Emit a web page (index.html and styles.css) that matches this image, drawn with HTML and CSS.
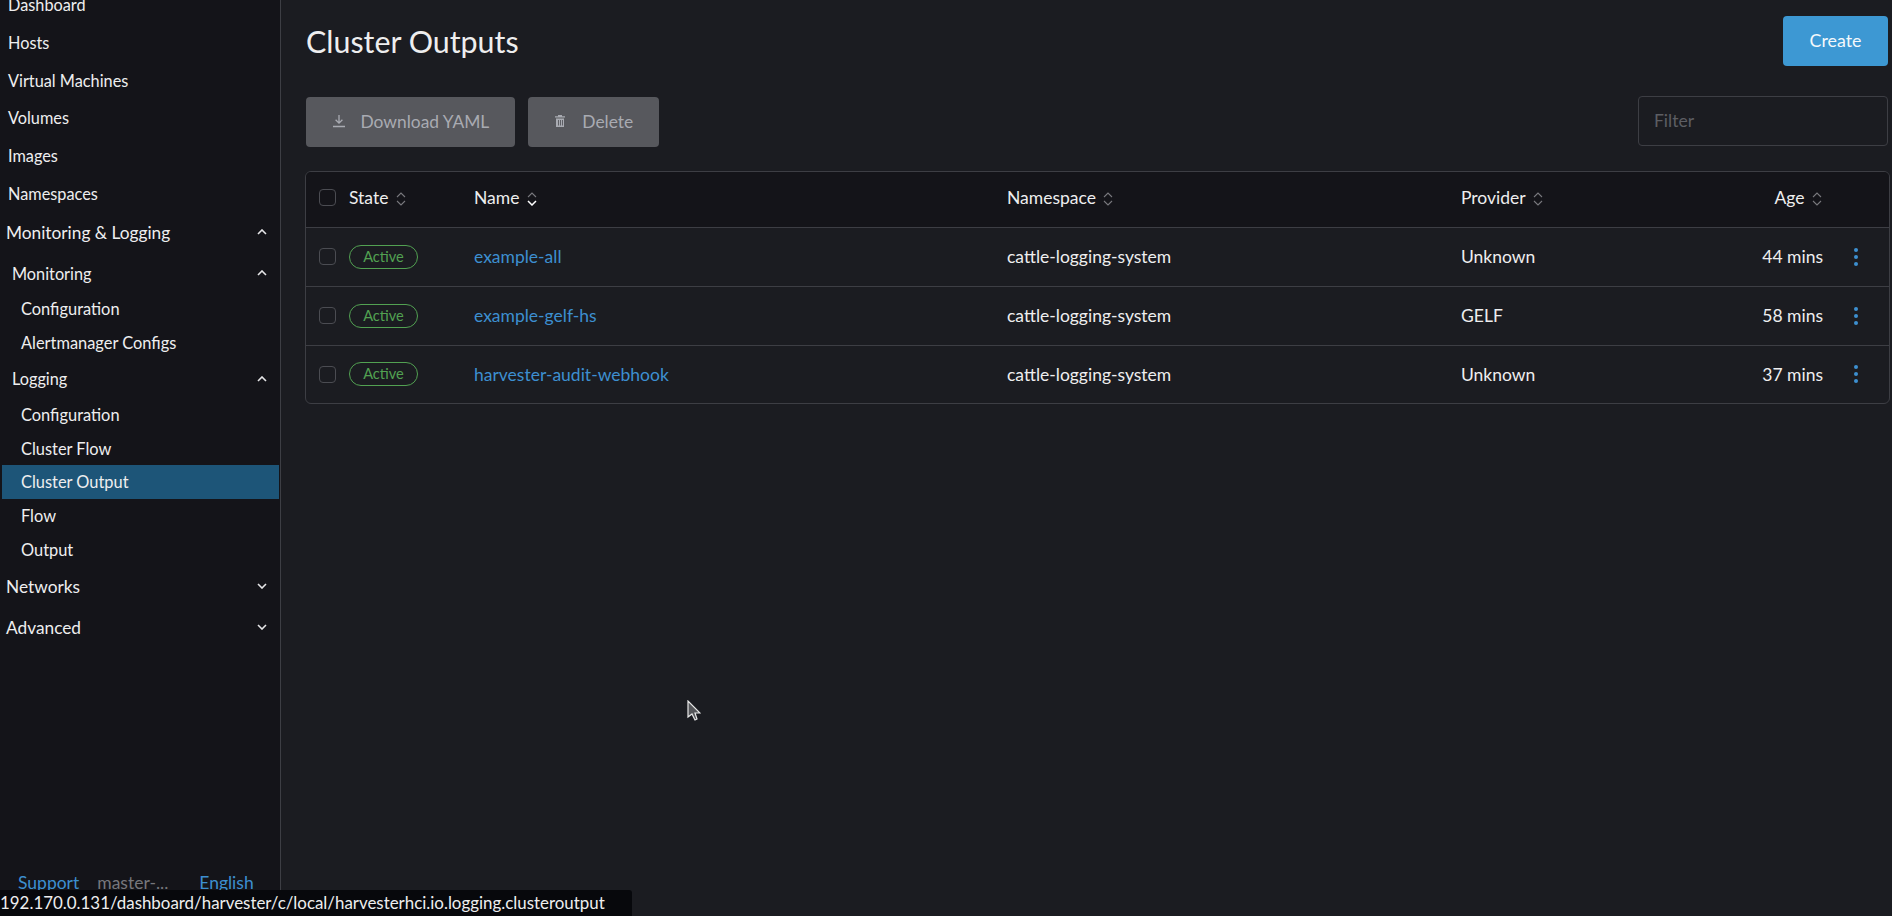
FILE: index.html
```html
<!DOCTYPE html>
<html lang="en">
<head>
    <meta charset="UTF-8">
    <meta name="viewport" content="width=device-width, initial-scale=1.0">
    <title>Cluster Outputs</title>
    <link rel="stylesheet" href="styles.css">
</head>
<body>
    <svg class="icon-defs" width="0" height="0" aria-hidden="true">
        <symbol id="chev-up" viewBox="0 0 10 6"><path d="M1 5l4-4 4 4" fill="none" stroke="currentColor" stroke-width="1.6"/></symbol>
        <symbol id="chev-down" viewBox="0 0 10 6"><path d="M1 1l4 4 4-4" fill="none" stroke="currentColor" stroke-width="1.6"/></symbol>
        <symbol id="sort" viewBox="0 0 10 14"><path d="M1 5l4-4 4 4M1 9l4 4 4-4" fill="none" stroke="currentColor" stroke-width="1.1"/></symbol>
        <symbol id="sort-down" viewBox="0 0 10 14"><path d="M1 5l4-4 4 4" fill="none" stroke="#77777c" stroke-width="1.1"/><path d="M1 9l4 4 4-4" fill="none" stroke="#fff" stroke-width="1.5"/></symbol>
    </svg>

    <!-- Left nav -->
    <aside class="sidebar">
        <nav class="nav">
            <a class="nav-item">Dashboard</a>
            <a class="nav-item">Hosts</a>
            <a class="nav-item">Virtual Machines</a>
            <a class="nav-item">Volumes</a>
            <a class="nav-item">Images</a>
            <a class="nav-item">Namespaces</a>
            <div class="nav-group">Monitoring &amp; Logging <svg class="chev"><use href="#chev-up"/></svg></div>
            <div class="nav-sub nav-sub-first">Monitoring <svg class="chev"><use href="#chev-up"/></svg></div>
            <a class="nav-leaf">Configuration</a>
            <a class="nav-leaf">Alertmanager Configs</a>
            <div class="nav-sub">Logging <svg class="chev"><use href="#chev-up"/></svg></div>
            <a class="nav-leaf">Configuration</a>
            <a class="nav-leaf">Cluster Flow</a>
            <a class="nav-leaf active">Cluster Output</a>
            <a class="nav-leaf">Flow</a>
            <a class="nav-leaf">Output</a>
            <div class="nav-group">Networks <svg class="chev"><use href="#chev-down"/></svg></div>
            <div class="nav-group">Advanced <svg class="chev"><use href="#chev-down"/></svg></div>
        </nav>
        <div class="side-footer">
            <a class="link">Support</a>
            <span class="version">master-...</span>
            <a class="link">English</a>
        </div>
    </aside>

    <!-- Right main content -->
    <main class="main">
        <header class="title-row">
            <h1>Cluster Outputs</h1>
            <button class="btn btn-primary">Create</button>
        </header>

        <div class="toolbar">
            <button class="btn btn-off">
                <svg class="btn-icon" viewBox="0 0 14 14"><path d="M7 1v8M3.6 5.8L7 9.2l3.4-3.4M1 12.5h12" fill="none" stroke="currentColor" stroke-width="1.3"/></svg>
                Download YAML
            </button>
            <button class="btn btn-off">
                <svg class="btn-icon" viewBox="0 0 14 14"><path d="M5 1h4v1.2h3v1.3H2V2.2h3zM3 4.5h8V13H3zM5 6v5.5h.9V6zm2.1 0v5.5H8V6zm2 0v5.5h.9V6z" fill="currentColor" fill-rule="evenodd"/></svg>
                Delete
            </button>
            <input class="filter" type="text" placeholder="Filter">
        </div>

        <table class="grid">
            <thead>
                <tr>
                    <th class="col-check"><span class="check"></span></th>
                    <th class="col-state">State <svg class="sort"><use href="#sort"/></svg></th>
                    <th class="col-name">Name <svg class="sort"><use href="#sort-down"/></svg></th>
                    <th class="col-ns">Namespace <svg class="sort"><use href="#sort"/></svg></th>
                    <th class="col-provider">Provider <svg class="sort"><use href="#sort"/></svg></th>
                    <th class="col-age">Age <svg class="sort"><use href="#sort"/></svg></th>
                    <th class="col-menu"></th>
                </tr>
            </thead>
            <tbody>
                <tr>
                    <td><span class="check"></span></td>
                    <td><span class="badge">Active</span></td>
                    <td><a class="link">example-all</a></td>
                    <td>cattle-logging-system</td>
                    <td>Unknown</td>
                    <td class="age">44 mins</td>
                    <td class="kebab"><i></i><i></i><i></i></td>
                </tr>
                <tr>
                    <td><span class="check"></span></td>
                    <td><span class="badge">Active</span></td>
                    <td><a class="link">example-gelf-hs</a></td>
                    <td>cattle-logging-system</td>
                    <td>GELF</td>
                    <td class="age">58 mins</td>
                    <td class="kebab"><i></i><i></i><i></i></td>
                </tr>
                <tr>
                    <td><span class="check"></span></td>
                    <td><span class="badge">Active</span></td>
                    <td><a class="link">harvester-audit-webhook</a></td>
                    <td>cattle-logging-system</td>
                    <td>Unknown</td>
                    <td class="age">37 mins</td>
                    <td class="kebab"><i></i><i></i><i></i></td>
                </tr>
            </tbody>
        </table>
    </main>

    <!-- browser link preview + mouse pointer sit over the page -->
    <div class="status-bar">192.170.0.131/dashboard/harvester/c/local/harvesterhci.io.logging.clusteroutput</div>
    <svg class="cursor" viewBox="0 0 14 22"><path d="M1 1v16l4-3 3 6 2-1-2-6h5z" fill="#55565a" stroke="#e8e8e8" stroke-width="1.2"/></svg>
</body>
</html>
```

FILE: styles.css
```css
* { box-sizing: border-box; }
html, body { height: 100%; }
body { margin: 0; display: flex; height: 916px; overflow: hidden; position: relative; background: #1b1c21; color: #eeeeef; font-family: Lato, "Open Sans", sans-serif; font-size: 17.5px; }
.icon-defs { position: absolute; }
.link { color: #3d8fd0; text-decoration: none; }

.sidebar { width: 281px; flex: none; display: flex; flex-direction: column; background: #141419; border-right: 1px solid #3d3e44; overflow: hidden; }
.nav { margin-top: -14px; padding-left: 2px; padding-right: 1px; }
.nav-item { display: block; height: 37.8px; line-height: 37.8px; padding-left: 6px; font-size: 16.3px; }
.nav-group { display: flex; justify-content: space-between; align-items: center; height: 41px; padding: 0 12px 2px 4px; font-size: 17.3px; }
.nav-sub { display: flex; justify-content: space-between; align-items: center; height: 38px; padding: 0 12px 0 10px; font-size: 16.3px; }
.nav-sub-first { height: 38.5px; }
.nav-leaf { display: block; height: 33.8px; line-height: 33.8px; padding-left: 19px; font-size: 16.4px; }
.nav-leaf.active { background: #1d5578; }
.chev { width: 10px; height: 6px; color: #e6e6e8; }
.side-footer { margin-top: auto; height: 46px; padding: 2px 0 0 18px; display: flex; font-size: 17.5px; line-height: 22px; }
.version { color: #77777c; margin-left: 18px; width: 102px; }

.main { flex: 1; min-width: 0; padding: 16px 4px 0 25px; }
.title-row { display: flex; justify-content: space-between; align-items: center; height: 50px; }
h1 { margin: 0; font-size: 30.4px; font-weight: 400; }
.btn { height: 50px; border: none; border-radius: 4px; font-family: inherit; font-size: 17.4px; padding: 0 25.5px 2px; display: inline-flex; align-items: center; }
.btn-primary { background: #3d98d3; color: #f4f8fb; font-size: 17.8px; width: 105px; justify-content: center; }
.btn-off { background: #57585d; color: #a9abb2; }
.btn-icon { width: 14px; height: 14px; margin-right: 15px; }
.toolbar { display: flex; gap: 13px; margin-top: 31px; }
.filter { margin-left: auto; margin-top: -1px; width: 250px; height: 50px; padding: 0 0 2px 15px; background: transparent; border: 1px solid #3d3e44; border-radius: 4px; font-family: inherit; font-size: 17.5px; color: #e6e6e8; }
.filter::placeholder { color: #5d5e63; }

.grid { width: 1584px; margin-top: 24px; margin-left: -1px; table-layout: fixed; border-collapse: separate; border-spacing: 0; border: 1px solid #3d3e44; border-radius: 6px; overflow: hidden; }
.grid th { height: 56px; background: #141419; font-weight: 400; text-align: left; border-bottom: 1px solid #3d3e44; padding: 0 0 4px; }
.grid td { height: 59px; padding: 0 0 1px; border-bottom: 1px solid #3d3e44; }
.grid tbody tr:last-child td { border-bottom: none; height: 57px; }
.col-check { width: 43px; }
.col-state { width: 125px; }
.col-name { width: 533px; }
.col-ns { width: 454px; }
.col-provider { width: 250px; }
.col-age { width: 112px; text-align: right !important; padding-right: 1px !important; }
.col-menu { width: 66px; }
.check { display: block; width: 17px; height: 17px; margin-left: 13px; border: 1px solid #4b4c52; border-radius: 4px; }
.sort { width: 10px; height: 14px; margin-left: 3px; color: #77777c; vertical-align: -2px; }
.badge { display: inline-block; width: 69px; height: 24px; line-height: 22px; text-align: center; border: 1px solid #52a152; border-radius: 12px; color: #52a152; font-size: 14.6px; }
.age { text-align: right; }
.kebab { text-align: center; padding-right: 3px; }
.kebab i { display: block; width: 4px; height: 4px; margin: 3px auto; border-radius: 50%; background: #3d8fd0; }

.status-bar { position: absolute; left: 0; bottom: 0; width: 632px; height: 26px; line-height: 26px; background: #07080c; color: #eeeeef; font-size: 16.9px; white-space: nowrap; border-top-right-radius: 3px; }
.cursor { position: absolute; left: 687px; top: 700px; width: 14px; height: 22px; }
```
